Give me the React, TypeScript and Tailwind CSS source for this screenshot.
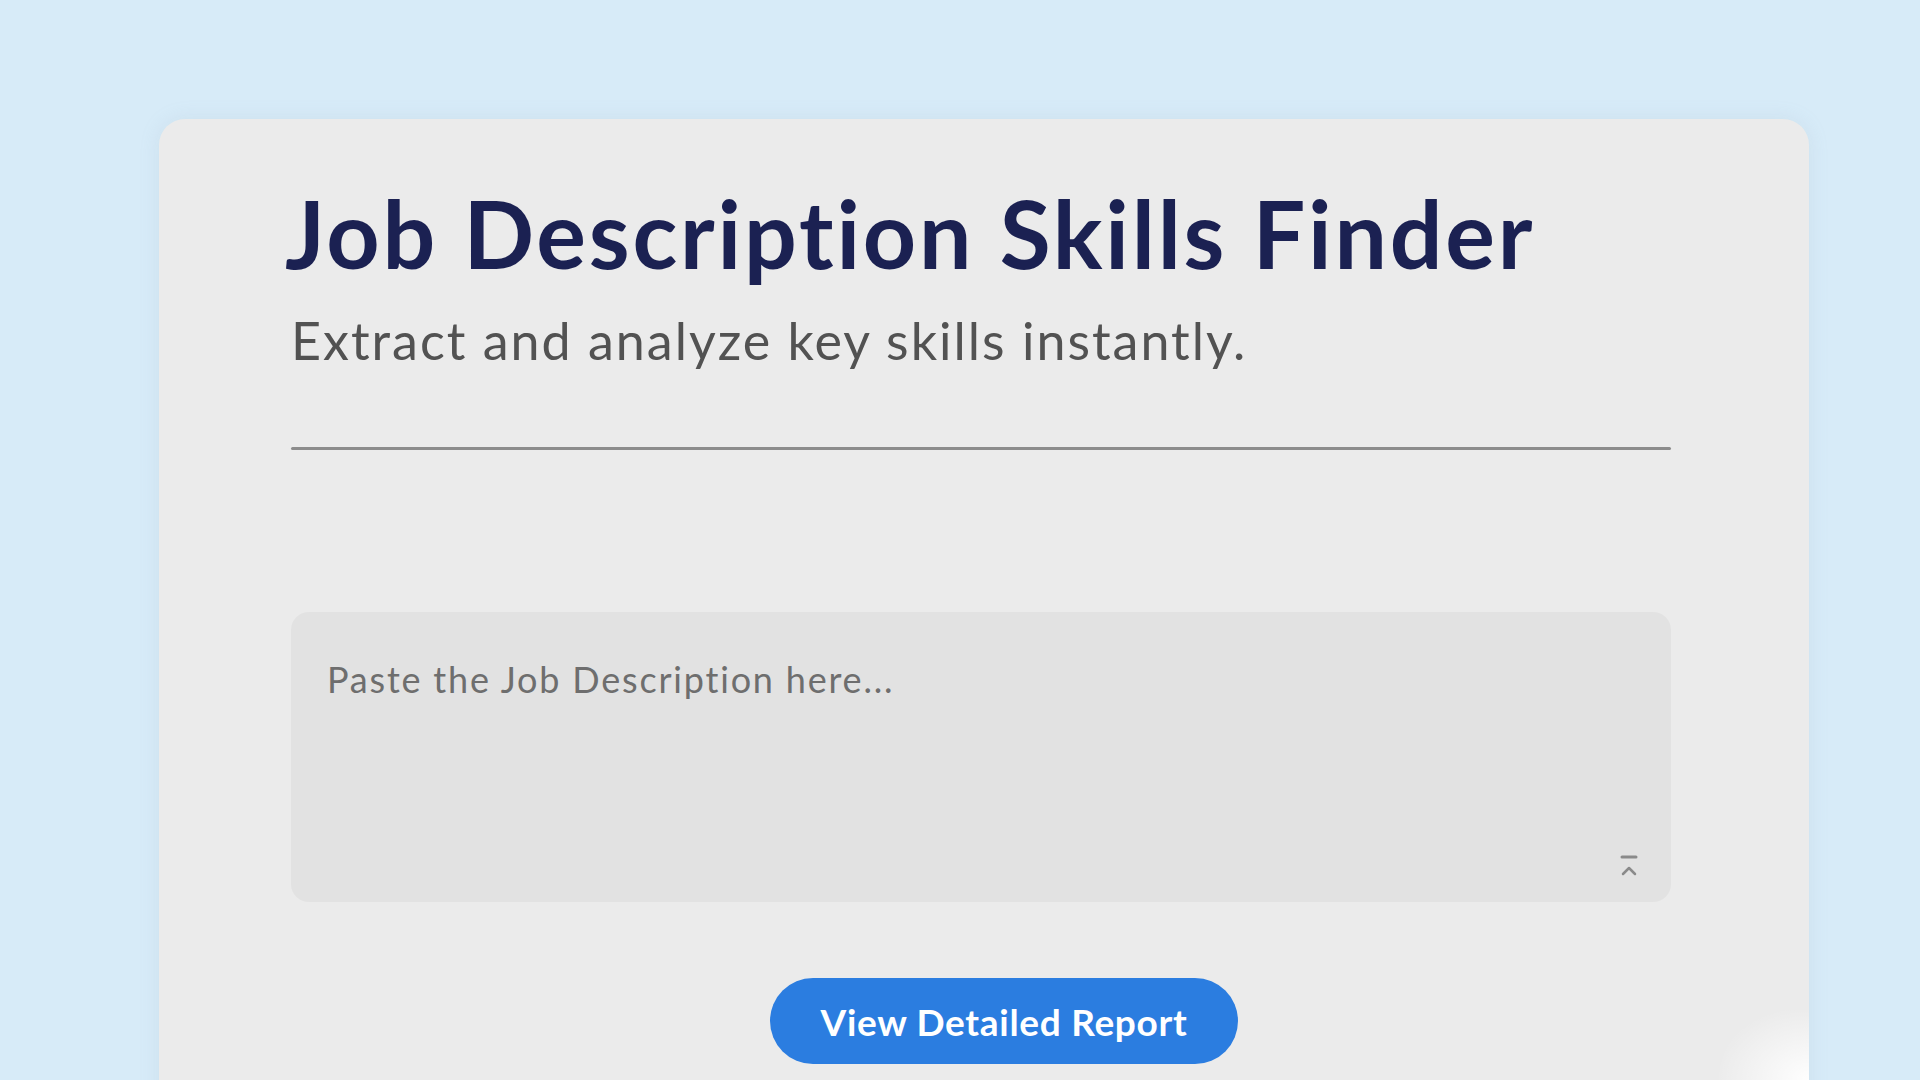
import React from "react";

function ResizeGrip() {
  return (
    <svg width="24" height="30" viewBox="0 0 24 30" fill="none" className="absolute right-[30px] bottom-[20px]">
      <line x1="5" y1="5" x2="19" y2="5" stroke="#8a8a8a" strokeWidth="3" strokeLinecap="round" />
      <polyline points="6,22 12,16 18,22" stroke="#8a8a8a" strokeWidth="2.5" strokeLinecap="round" strokeLinejoin="round" />
    </svg>
  );
}

export default function App() {
  return (
    <div
      className="w-[1920px] h-[1080px] overflow-hidden bg-[#d7ebf8] pt-[119px] pl-[159px]"
      style={{ fontFamily: "Lato, 'Open Sans', sans-serif" }}
    >
      <div className="relative w-[1650px] h-[1100px] rounded-[26px] bg-[#ebebeb] shadow-[0_0_20px_rgba(140,160,175,0.15)] pt-[68px] pl-[132px] pr-[138px]">
        <h1 className="-ml-[6px] text-[93px] leading-none font-bold text-[#1b2152] tracking-[2.8px]">
          Job Description Skills Finder
        </h1>
        <p className="mt-[34px] text-[52px] leading-none font-normal text-[#525252] tracking-[2px]">
          Extract and analyze key skills instantly.
        </p>
        <div className="mt-[81px] h-[3px] bg-[#8c8c8c] rounded-full" />

        <div className="relative mt-[162px] h-[290px] rounded-[18px] bg-[#e2e2e2]">
          <textarea
            className="w-full h-full resize-none bg-transparent outline-none pt-[49px] pl-[36px] text-[36px] leading-none tracking-[1.8px] text-[#555] placeholder:text-[#6e6e6e]"
            placeholder="Paste the Job Description here..."
          />
          <ResizeGrip />
        </div>

        <div className="mt-[76px] flex justify-center pl-[46px]">
          <button className="w-[468px] h-[86px] rounded-full bg-[#2b7de0] text-white text-[37px] font-bold leading-none tracking-[0.7px]">
            View Detailed Report
          </button>
        </div>

        {/* soft light spill in the lower right corner */}
        <div className="absolute right-0 bottom-[139px] w-[90px] h-[70px] rounded-tl-full bg-[radial-gradient(ellipse_at_bottom_right,rgba(255,255,255,0.95),rgba(255,255,255,0)_75%)]" />
      </div>
    </div>
  );
}
